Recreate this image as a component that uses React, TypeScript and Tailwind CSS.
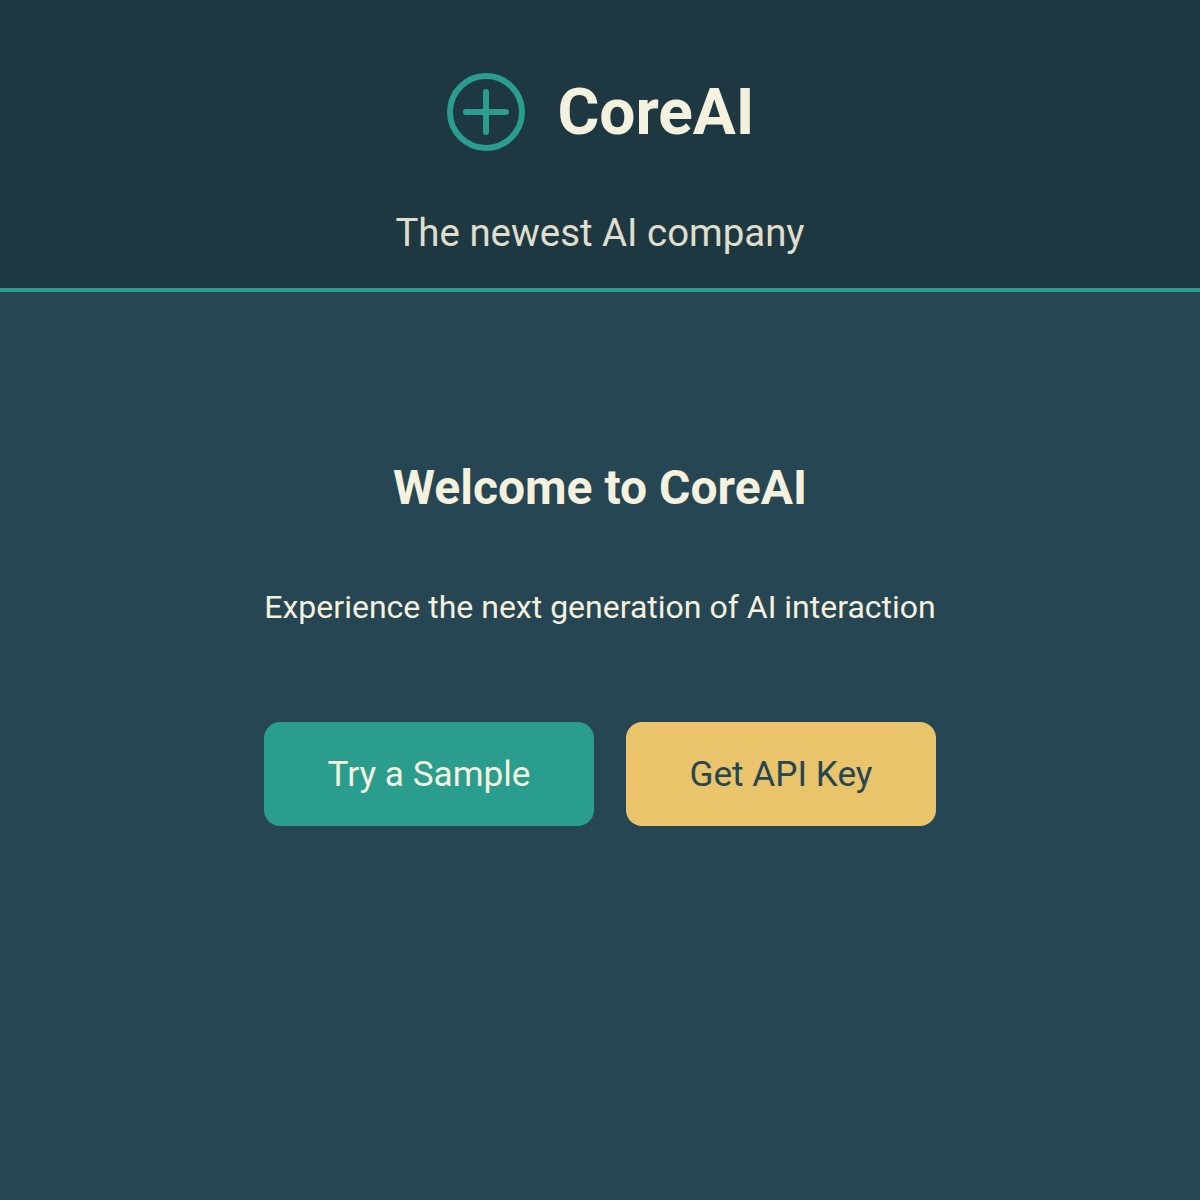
import React from 'react'

const Logo: React.FC = () => (
  <svg width="96" height="96" viewBox="0 0 96 96" fill="none" stroke="#2a9d8f" strokeWidth="6">
    <circle cx="48" cy="48" r="36" />
    <path d="M48 28v40M28 48h40" strokeLinecap="round" />
  </svg>
)

const App: React.FC = () => {
  return (
    <div className="min-h-screen flex flex-col bg-[#264653] text-[#f4f1de] font-['Roboto',sans-serif] antialiased">
      <header className="h-[292px] flex flex-col items-center bg-[#1e3842] border-b-4 border-[#2a9d8f] pt-16">
        <div className="flex items-center gap-[23px] pr-[7px]">
          <Logo />
          <h1 className="pt-0.5 text-[64px] leading-[94px] font-bold">CoreAI</h1>
        </div>
        <p className="mt-[44px] text-[38.4px] leading-[58px] opacity-90">The newest AI company</p>
      </header>

      <main className="flex-1 flex flex-col items-center pt-[160px]">
        <h2 className="text-[48px] leading-[72px] font-bold">Welcome to CoreAI</h2>
        <p className="mt-[59px] text-[32px] leading-[48px]">Experience the next generation of AI interaction</p>
        <div className="mt-[91px] flex gap-8">
          <button className="w-[330px] h-[104px] rounded-2xl bg-[#2a9d8f] text-[35.2px]">Try a Sample</button>
          <button className="w-[310px] h-[104px] rounded-2xl bg-[#e9c46a] text-[#264653] text-[35.2px]">Get API Key</button>
        </div>
      </main>
    </div>
  )
}

export default App
